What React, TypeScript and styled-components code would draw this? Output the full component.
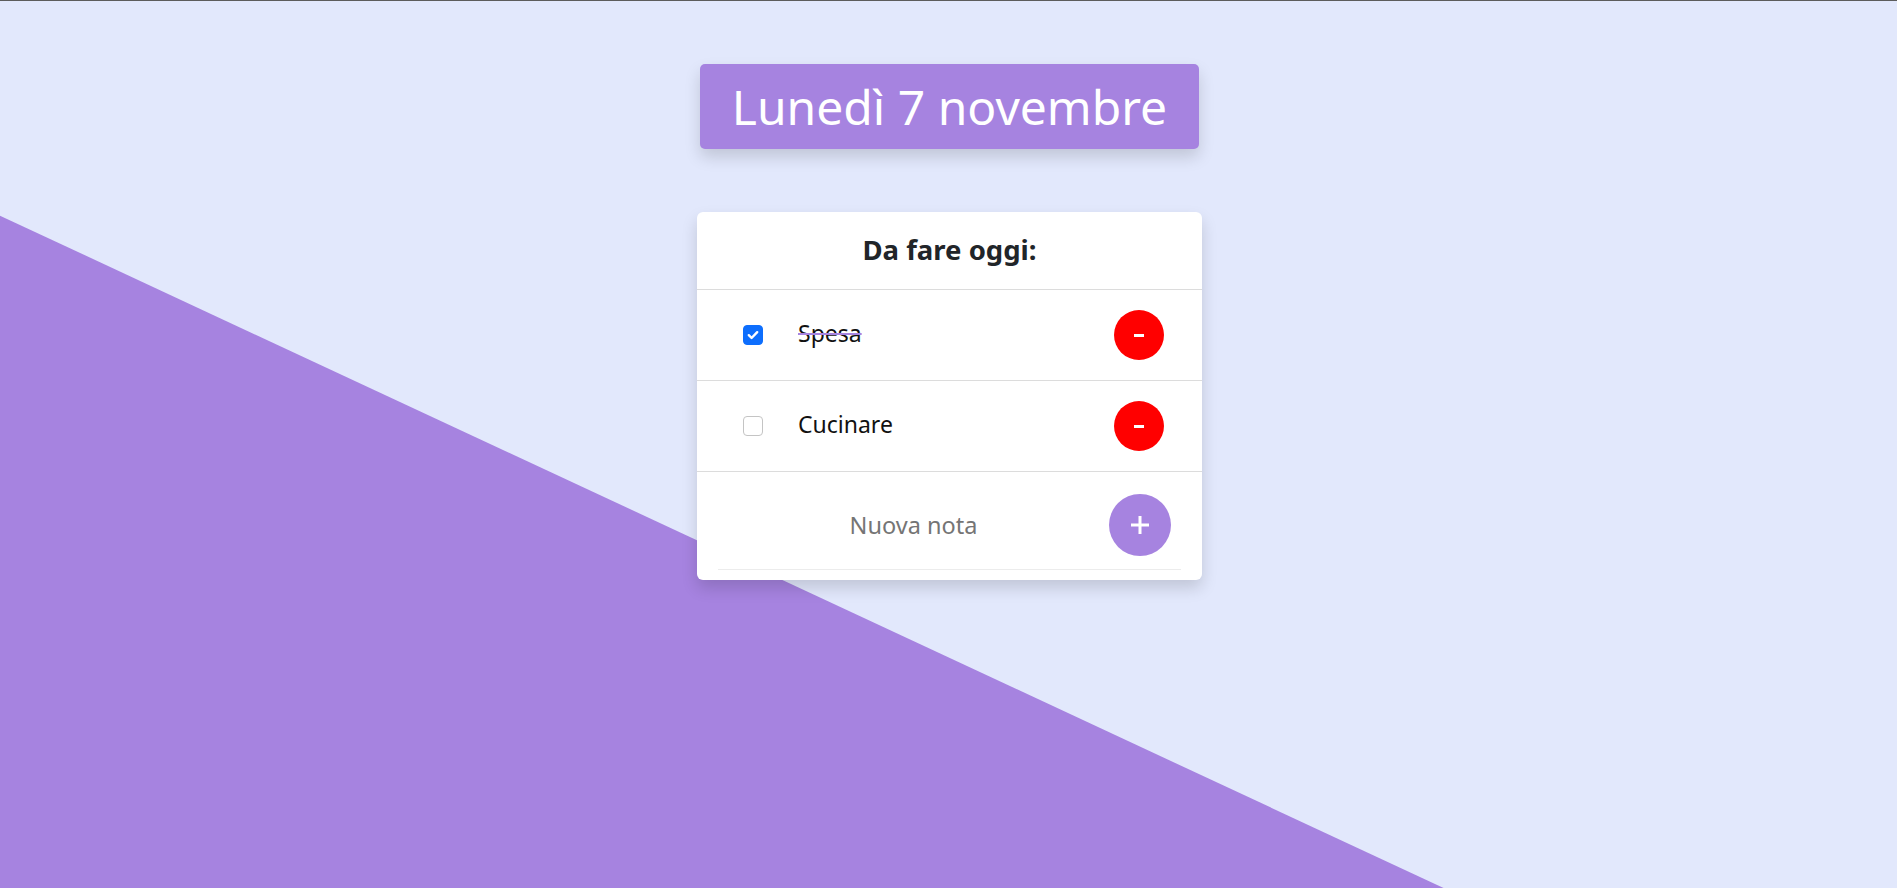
import React, { useState } from "react";
import styled, { createGlobalStyle } from "styled-components";

const GlobalStyle = createGlobalStyle`
  html, body {
    margin: 0;
    padding: 0;
  }
  body {
    background: #e2e8fc;
    font-family: "Noto Sans", "Open Sans", sans-serif;
    color: #212529;
  }
  * { box-sizing: border-box; }
`;

const Page = styled.div`
  position: relative;
  min-height: 100vh;
  border-top: 1px solid #5c5c5c;
  overflow: hidden;
  &::before {
    content: "";
    position: absolute;
    inset: 0;
    background: #a683e0;
    clip-path: polygon(0 24.2%, 76.1% 100%, 0 100%);
  }
`;

const Content = styled.main`
  position: relative;
  display: flex;
  flex-direction: column;
  align-items: center;
  padding-top: 63px;
  padding-left: 2px;
`;

const DateBox = styled.h1`
  margin: 0;
  height: 85px;
  padding: 0 32px;
  display: flex;
  align-items: center;
  background: #a683e0;
  color: #ffffff;
  border-radius: 5px;
  font-size: 48px;
  font-weight: 400;
  box-shadow: 0 8px 16px rgba(0, 0, 0, 0.15);
`;

const Card = styled.section`
  margin-top: 63px;
  width: 505px;
  background: #ffffff;
  border-radius: 6px;
  box-shadow: 0 8px 16px rgba(0, 0, 0, 0.15);
  display: flex;
  flex-direction: column;
`;

const CardHeader = styled.h2`
  margin: 0;
  height: 78px;
  display: flex;
  align-items: center;
  justify-content: center;
  border-bottom: 1px solid #dcdcdc;
  font-size: 27.5px;
  font-weight: 700;
  color: #212529;
  padding-bottom: 2px;
`;

const TaskRow = styled.div`
  height: 91px;
  display: flex;
  align-items: center;
  padding: 0 38px 0 46px;
  border-bottom: 1px solid #dcdcdc;
`;

const CheckBox = styled.button<{ $checked: boolean }>`
  width: 20px;
  height: 20px;
  padding: 0;
  flex: none;
  border-radius: 4px;
  border: 1px solid ${(p) => (p.$checked ? "#0d6efd" : "#c4c4c4")};
  background: ${(p) => (p.$checked ? "#0d6efd" : "#ffffff")};
  display: flex;
  align-items: center;
  justify-content: center;
  cursor: pointer;
  svg { display: block; }
`;

const TaskText = styled.span<{ $done: boolean }>`
  flex: 1;
  margin-left: 35px;
  padding-bottom: 5px;
  font-size: 23px;
  color: #111;
  text-decoration: ${(p) => (p.$done ? "line-through" : "none")};
  text-decoration-color: #a683e0;
  text-decoration-thickness: 2px;
`;

const RoundButton = styled.button<{ $size: number; $color: string; $gapRight?: number }>`
  width: ${(p) => p.$size}px;
  height: ${(p) => p.$size}px;
  margin-right: ${(p) => p.$gapRight ?? 0}px;
  flex: none;
  border: none;
  border-radius: 50%;
  background: ${(p) => p.$color};
  padding: 0;
  display: flex;
  align-items: center;
  justify-content: center;
  cursor: pointer;
`;

const MinusBar = styled.span`
  display: block;
  width: 10px;
  height: 3px;
  background: #fff;
`;

const AddRow = styled.div`
  height: 108px;
  padding: 0 21px 10px 21px;
  display: flex;
  flex-direction: column;
  justify-content: flex-end;
`;

const AddGroup = styled.div`
  display: flex;
  align-items: center;
  border-bottom: 1px solid #ececec;
  padding-bottom: 13px;
`;

const NoteInput = styled.input`
  flex: 1;
  min-width: 0;
  border: none;
  outline: none;
  background: transparent;
  text-align: center;
  font-family: "Noto Sans", "Open Sans", sans-serif;
  font-size: 23.5px;
  color: #212529;
  &::placeholder {
    color: #757575;
  }
`;

const tasks0 = [
  { id: 1, text: "Spesa", done: true },
  { id: 2, text: "Cucinare", done: false },
];

export default function App() {
  const [tasks, setTasks] = useState(tasks0);
  const toggle = (id: number) =>
    setTasks((t) => t.map((x) => (x.id === id ? { ...x, done: !x.done } : x)));

  return (
    <>
      <GlobalStyle />
      <Page>
        <Content>
          <DateBox>Lunedì 7 novembre</DateBox>
          <Card>
            <CardHeader>Da fare oggi:</CardHeader>
            {tasks.map((t) => (
              <TaskRow key={t.id}>
                <CheckBox $checked={t.done} onClick={() => toggle(t.id)} aria-label="fatto">
                  {t.done && (
                    <svg width="12" height="10" viewBox="0 0 12 10">
                      <path d="M1.8 5.2 L4.6 8 L10.2 2.2" fill="none" stroke="#fff" strokeWidth="2.4" strokeLinecap="round" strokeLinejoin="round" />
                    </svg>
                  )}
                </CheckBox>
                <TaskText $done={t.done}>{t.text}</TaskText>
                <RoundButton $size={50} $color="#ff0000" aria-label="rimuovi">
                  <MinusBar />
                </RoundButton>
              </TaskRow>
            ))}
            <AddRow>
              <AddGroup>
                <NoteInput placeholder="Nuova nota" />
                <RoundButton $size={62} $color="#a683e0" $gapRight={10} aria-label="aggiungi">
                  <svg width="18" height="18" viewBox="0 0 18 18">
                    <path d="M9 0 V18 M0 9 H18" stroke="#fff" strokeWidth="3" />
                  </svg>
                </RoundButton>
              </AddGroup>
            </AddRow>
          </Card>
        </Content>
      </Page>
    </>
  );
}
